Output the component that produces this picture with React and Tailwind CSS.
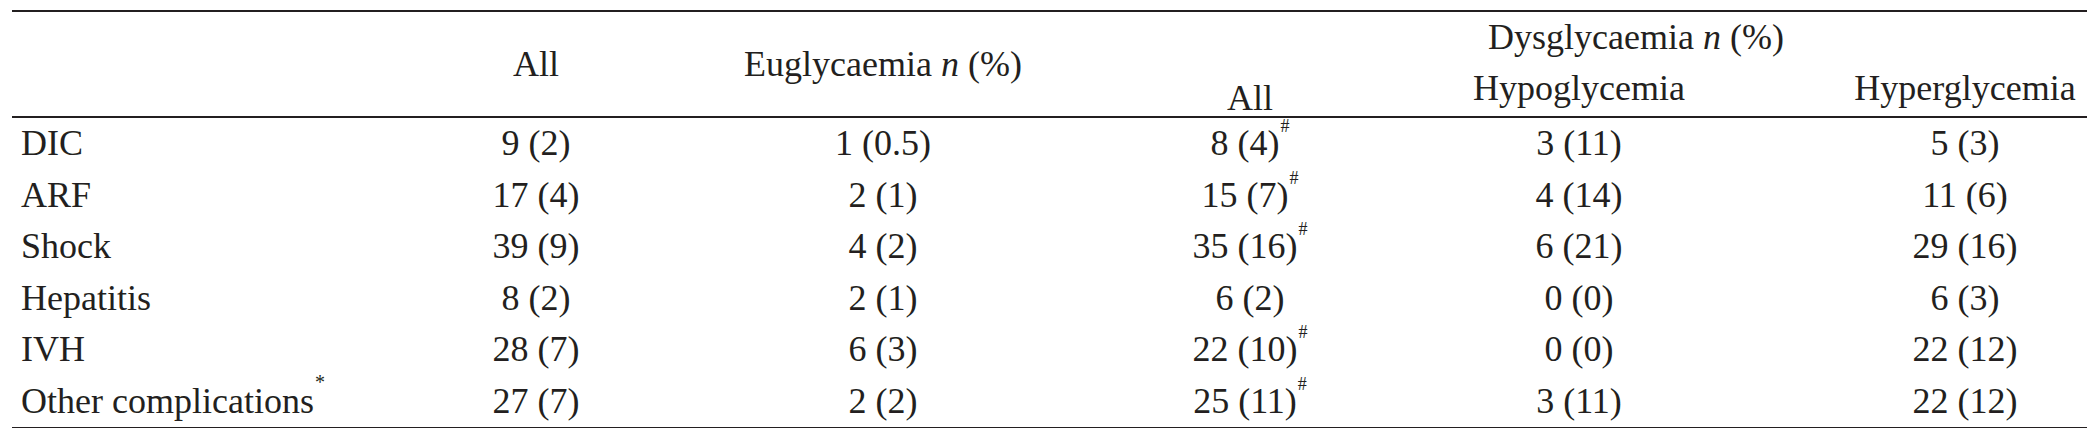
import React from "react";

const rows = [
  ["DIC", "9 (2)", "1 (0.5)", "8 (4)", true, "3 (11)", "5 (3)"],
  ["ARF", "17 (4)", "2 (1)", "15 (7)", true, "4 (14)", "11 (6)"],
  ["Shock", "39 (9)", "4 (2)", "35 (16)", true, "6 (21)", "29 (16)"],
  ["Hepatitis", "8 (2)", "2 (1)", "6 (2)", false, "0 (0)", "6 (3)"],
  ["IVH", "28 (7)", "6 (3)", "22 (10)", true, "0 (0)", "22 (12)"],
  ["Other complications", "27 (7)", "2 (2)", "25 (11)", true, "3 (11)", "22 (12)"],
];

const cols = "grid grid-cols-[479px_90px_604px_130px_528px_244px]";

function Cell({ children, className = "" }) {
  return (
    <div className={"flex justify-center whitespace-nowrap " + className}>
      <span className="whitespace-nowrap">{children}</span>
    </div>
  );
}

export default function App() {
  return (
    <div
      className="w-[2100px] h-[429px] bg-white text-[#231f20] text-[36px] overflow-hidden"
      style={{ fontFamily: '"Liberation Serif", "Times New Roman", serif' }}
    >
      <div className="ml-[12px] mt-[10px] w-[2075px]">
        <div className="border-t-2 border-[#231f20]" />
        {/* header */}
        <div className={cols + " grid-rows-[50px_54px] leading-[52px]"}>
          <div className="row-span-2" />
          <Cell className="row-span-2 items-center">All</Cell>
          <Cell className="row-span-2 items-center">
            Euglycaemia <i>n</i> (%)
          </Cell>
          <Cell className="col-span-3 items-center">
            Dysglycaemia <i>n</i> (%)
          </Cell>
          <Cell className="items-end leading-none">All</Cell>
          <Cell className="items-end leading-[52px] pb-[2px]">Hypoglycemia</Cell>
          <Cell className="items-end leading-[52px] pb-[2px]">Hyperglycemia</Cell>
        </div>
        <div className="border-t-2 border-[#231f20]" />
        {/* body */}
        <div className="flex flex-col">
          {rows.map((r, i) => (
            <div key={i} className={cols + " h-[51.5px] leading-[51.5px]"}>
              <div className="pl-[9px] whitespace-nowrap">
                {r[0]}
                {i === rows.length - 1 && (
                  <sup className="text-[20px] align-[14px] leading-none ml-[1px]">*</sup>
                )}
              </div>
              <Cell>{r[1]}</Cell>
              <Cell>{r[2]}</Cell>
              <Cell>
                {r[3]}
                {r[4] && (
                  <sup className="text-[18px] align-[14px] leading-none ml-[1px]">#</sup>
                )}
              </Cell>
              <Cell>{r[5]}</Cell>
              <Cell>{r[6]}</Cell>
            </div>
          ))}
        </div>
        <div className="border-t border-[#231f20]" />
      </div>
    </div>
  );
}
